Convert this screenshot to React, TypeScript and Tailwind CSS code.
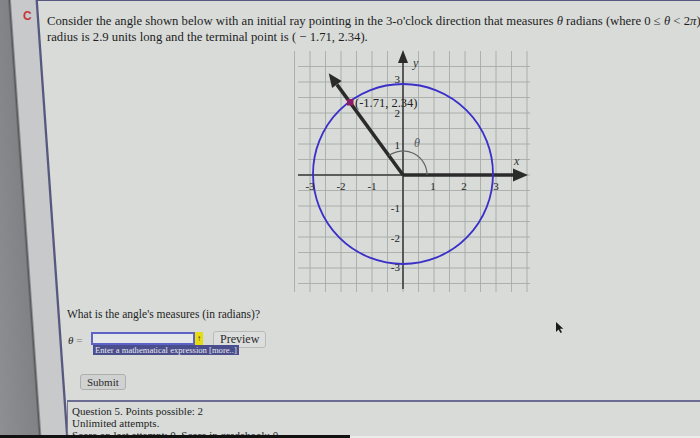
import React from 'react';

const O = { x: 403, y: 180 };
const step = 15.5;

function Graph() {
  const vLines = [];
  for (let k = -7; k <= 8; k++) vLines.push(O.x + k * step);
  const hLines = [];
  for (let k = -7; k <= 7; k++) hLines.push(O.y + k * step);

  const xLabels = [
    { t: '-3', x: 310 },
    { t: '-2', x: 341 },
    { t: '-1', x: 372 },
    { t: '1', x: 433 },
    { t: '2', x: 464 },
    { t: '3', x: 496 },
  ];
  const yLabels = [
    { t: '3', y: 88 },
    { t: '2', y: 122 },
    { t: '1', y: 154 },
    { t: '-1', y: 217 },
    { t: '-2', y: 247 },
    { t: '-3', y: 276 },
  ];

  return (
    <svg width={250} height={254} viewBox="290 48 250 254" className="block">
      {vLines.map((x) => (
        <line key={'v' + x} x1={x} y1={56} x2={x} y2={297} stroke="#a7aba8" strokeWidth={0.9} />
      ))}
      {hLines.map((y) => (
        <line key={'h' + y} x1={298} y1={y} x2={530} y2={y} stroke="#a7aba8" strokeWidth={0.9} />
      ))}

      {/* axes */}
      <line x1={298} y1={O.y} x2={O.x} y2={O.y} stroke="#383838" strokeWidth={1.3} />
      <line x1={O.x} y1={294} x2={O.x} y2={64} stroke="#333" strokeWidth={1.5} />
      <polygon points="403,55 398,68 408,68" fill="#2b2b2b" />

      {/* initial ray */}
      <line x1={O.x} y1={O.y} x2={517} y2={O.y} stroke="#2b2b2b" strokeWidth={3.5} />
      <polygon points="528,180 513,173.5 513,186.5" fill="#2b2b2b" />

      {/* circle */}
      <circle cx={O.x} cy={O.y - 1} r={90} fill="none" stroke="#3a2fc8" strokeWidth={1.8} />

      {/* terminal ray */}
      <line x1={O.x} y1={O.y} x2={337} y2={89.6} stroke="#2b2b2b" strokeWidth={3.5} />
      <polygon points="328.7,78.3 341.7,86.1 332.1,93.1" fill="#2b2b2b" />

      {/* angle arc */}
      <path d="M 427 180 A 24 24 0 0 0 388.8 160.6" fill="none" stroke="#666" strokeWidth={1.2} />

      {/* point */}
      <rect x={347} y={104} width={6.5} height={6.5} fill="#8a1c6a" />

      <g fill="#222" fontSize={11}>
        {xLabels.map((l) => (
          <text key={l.t} x={l.x} y={195} textAnchor="middle">
            {l.t}
          </text>
        ))}
        {yLabels.map((l) => (
          <text key={l.t} x={400} y={l.y} textAnchor="end">
            {l.t}
          </text>
        ))}
      </g>
      <text x={355} y={112} fontSize={12.5} fill="#222">
        (-1.71, 2.34)
      </text>
      <text x={413} y={72} fontSize={12} fontStyle="italic" fill="#333">
        y
      </text>
      <text x={514} y={170} fontSize={12} fontStyle="italic" fill="#333">
        x
      </text>
      <text x={414} y={152} fontSize={12} fontStyle="italic" fill="#555">
        θ
      </text>
    </svg>
  );
}

export default function App() {
  return (
    <div className="relative w-[700px] h-[438px] overflow-hidden flex font-['Liberation_Serif',serif] text-[#1e1e1e] bg-[linear-gradient(86deg,#8d8f92_0px,#808285_38px,#55575a_40px,#c7c9ca_42px,#c7c9ca_65.5px,#56587f_66.5px,#56587f_67.8px,#d8dbd8_68.8px)]">
      {/* gutter */}
      <div className="w-[37px] shrink-0 pt-[3px] pl-[23px]">
        <span className="font-['Liberation_Sans',sans-serif] font-bold text-[12px] text-[#c8343a] leading-none">C</span>
      </div>

      {/* main panel */}
      <div className="flex-1 flex flex-col min-w-0">
        <div className="h-[6px] bg-[#c9cbcc] border-b border-[#56587f]" />

        <div className="pl-[10px] pt-[12px] text-[12.7px] leading-[16px] whitespace-nowrap">
          <div>
            Consider the angle shown below with an initial ray pointing in the 3-o'clock direction that measures{' '}
            <i>θ</i> radians (where 0 ≤ <i>θ</i> &lt; 2<i>π</i>)
          </div>
          <div>radius is 2.9 units long and the terminal point is ( − 1.71, 2.34).</div>
        </div>

        <div className="ml-[253px] -mt-[2px]">
          <Graph />
        </div>

        <div className="ml-[30px] mt-[10px] text-[11.5px] leading-[14px]">What is the angle's measures (in radians)?</div>

        <div className="ml-[31px] mt-[11px] flex items-start">
          <span className="text-[11px] leading-[14px] pt-[1px] w-[23px]">
            <i>θ</i> <span className="text-[#777]">=</span>
          </span>
          <div className="flex flex-col">
            <div className="flex items-start">
              <div className="w-[104px] h-[13px] border-2 border-[#5d63c6] bg-[#e4e6e8]" />
              <div className="w-[8px] h-[14px] bg-[#e6dc10] text-[8px] leading-[14px] text-center">↑</div>
              <div className="ml-[10px] -mt-[1px] px-[6px] h-[17px] bg-[#dcdedd] border border-[#b9bbba] rounded-[3px] text-[12px] leading-[15px] text-[#2a2a2a]">
                Preview
              </div>
            </div>
            <div className="-mt-[3px] ml-[2px] self-start bg-[#4b4e8c] text-[#e8e8f0] text-[8.6px] leading-[10px] px-[2px] whitespace-nowrap">
              Enter a mathematical expression [more..]
            </div>
          </div>
        </div>

        <div className="ml-[43px] mt-[19px] self-start px-[6px] h-[16px] bg-[#d0d2d1] border border-[#adafae] rounded-[3px] text-[11px] leading-[14px] text-[#2a2a2a]">
          Submit
        </div>

        <div className="ml-[30px] mt-[10px] border-t-2 border-l border-t-[#6c6d92] border-l-[#7a7b8a] pl-[4px] pt-[3px] text-[11px] leading-[12px]">
          <div>Question 5. Points possible: 2</div>
          <div>Unlimited attempts.</div>
          <div>Score on last attempt: 0. Score in gradebook: 0</div>
        </div>
      </div>

      {/* mouse pointer */}
      <svg className="absolute left-[555px] top-[321px]" width={9} height={13} viewBox="0 0 9 13">
        <path d="M1 1 L1 11 L3.5 8.5 L5.5 12 L7 11.2 L5 7.8 L8.3 7.8 Z" fill="#1a1a1a" />
      </svg>

      {/* bottom bezel */}
      <div className="absolute left-0 bottom-0 w-[350px] h-[3px] bg-[#111]" />
      <div className="absolute left-[350px] bottom-0 right-0 h-[2px] bg-[#ececec]" />
    </div>
  );
}
